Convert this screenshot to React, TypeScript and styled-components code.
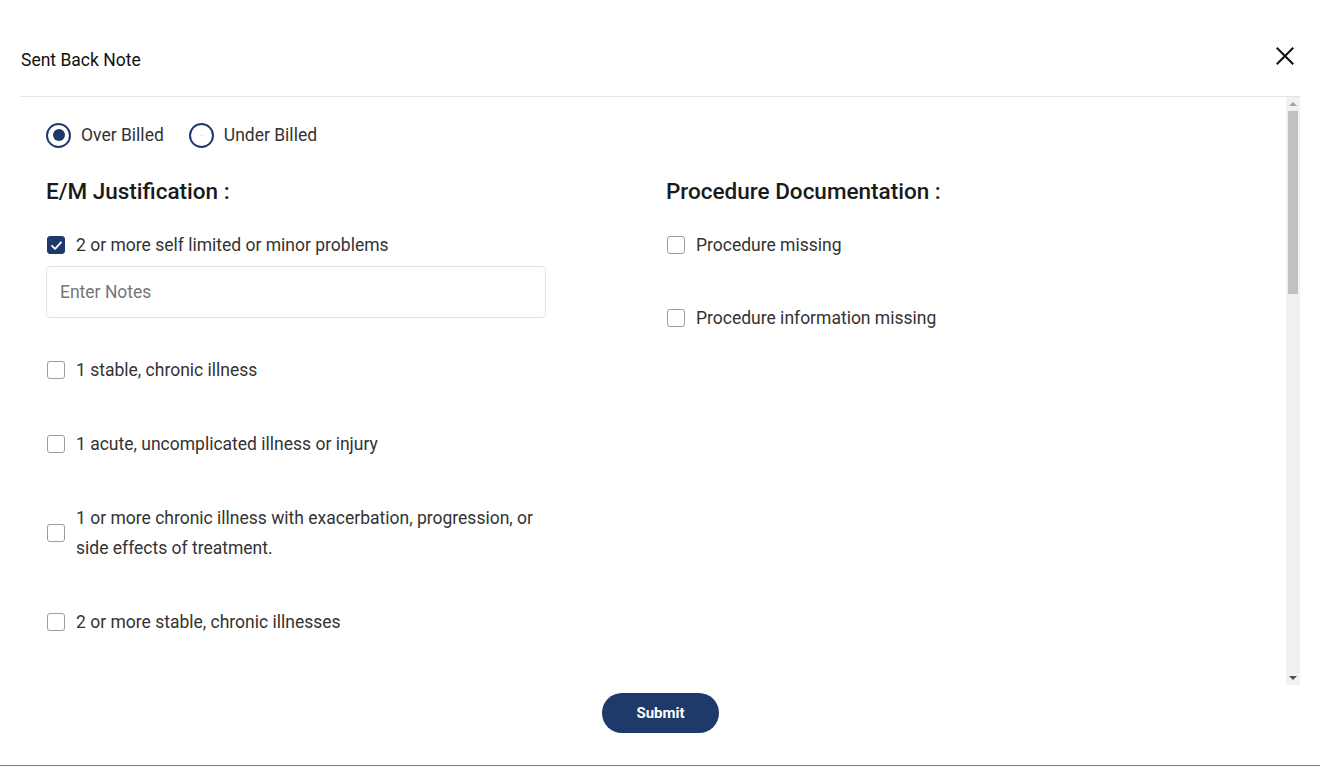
import React from "react";
import styled, { createGlobalStyle } from "styled-components";

const GlobalStyle = createGlobalStyle`
  html, body { margin: 0; padding: 0; background: #ffffff; }
  body { font-family: Roboto, "Liberation Sans", Arial, sans-serif; }
  * { box-sizing: border-box; }
`;

const NAVY = "#1e3a6a";

const Modal = styled.div`
  width: 1320px;
  height: 766px;
  background: #ffffff;
  border-bottom: 1px solid #7a7a7a;
  display: flex;
  flex-direction: column;
  padding: 0 20px 0 21px;
`;

const Header = styled.div`
  height: 97px;
  flex: none;
  display: flex;
  align-items: flex-start;
  justify-content: space-between;
  padding-top: 47px;
  border-bottom: 1px solid #e3e3e3;
`;

const Title = styled.h2`
  margin: 0;
  font-size: 17.5px;
  line-height: 26px;
  font-weight: 400;
  color: #111111;
`;

const CloseButton = styled.button`
  border: 0;
  background: transparent;
  padding: 0;
  margin-right: 6px;
  width: 18px;
  height: 18px;
  display: flex;
  cursor: pointer;
`;

const Body = styled.div`
  height: 588px;
  flex: none;
  display: flex;
`;

const Content = styled.div`
  flex: 1;
  overflow: hidden;
  padding: 26px 0 0 25px;
`;

const Scrollbar = styled.div`
  width: 14px;
  flex: none;
  background: #f1f1f1;
  display: flex;
  flex-direction: column;
  align-items: center;
`;

const ScrollArrow = styled.div<{ $down?: boolean }>`
  height: 14px;
  width: 14px;
  display: flex;
  align-items: center;
  justify-content: center;
  &::after {
    content: "";
    width: 0;
    height: 0;
    border-left: 4px solid transparent;
    border-right: 4px solid transparent;
    ${(p) =>
      p.$down
        ? `border-top: 4px solid #505050;`
        : `border-bottom: 4px solid #a3a3a3;`}
  }
`;

const ScrollThumb = styled.div`
  width: 10px;
  height: 183px;
  background: #c1c1c1;
`;

const ScrollSpacer = styled.div`
  flex: 1;
`;

const RadioRow = styled.div`
  display: flex;
  align-items: center;
  gap: 25px;
  height: 24px;
`;

const RadioOption = styled.label`
  display: flex;
  align-items: center;
  gap: 10px;
  font-size: 17.5px;
  color: #333333;
  cursor: pointer;
`;

const RadioCircle = styled.span<{ $checked?: boolean }>`
  width: 25px;
  height: 25px;
  border-radius: 50%;
  border: 2px solid ${NAVY};
  display: flex;
  align-items: center;
  justify-content: center;
  &::after {
    content: "";
    border-radius: 50%;
    width: ${(p) => (p.$checked ? "12px" : "1px")};
    height: ${(p) => (p.$checked ? "12px" : "1px")};
    background: ${(p) => (p.$checked ? NAVY : "#9aa3b5")};
  }
`;

const Columns = styled.div`
  display: grid;
  grid-template-columns: 620px 620px;
  margin-top: 32px;
`;

const Column = styled.div`
  display: flex;
  flex-direction: column;
`;

const Heading = styled.h3`
  margin: 0 0 27px;
  font-size: 22.5px;
  line-height: 24px;
  font-weight: 500;
  color: #1a1a1a;
`;

const Item = styled.div<{ $gap: number }>`
  width: 500px;
  padding-bottom: ${(p) => p.$gap}px;
`;

const CheckRow = styled.label`
  display: flex;
  align-items: center;
  gap: 11px;
  cursor: pointer;
`;

const Box = styled.span<{ $checked?: boolean }>`
  width: 18px;
  height: 18px;
  flex: none;
  margin-left: 1px;
  border-radius: 3px;
  display: flex;
  align-items: center;
  justify-content: center;
  background: ${(p) => (p.$checked ? NAVY : "#ffffff")};
  border: ${(p) => (p.$checked ? `1px solid ${NAVY}` : "1.5px solid #9c9c9c")};
`;

const Label = styled.span`
  font-size: 17.5px;
  line-height: 30px;
  color: #333333;
`;

const NotesInput = styled.input`
  display: block;
  margin-top: 6px;
  width: 500px;
  height: 52px;
  border: 1px solid #e2e2e2;
  border-radius: 4px;
  padding: 0 13px;
  font-family: inherit;
  font-size: 17.5px;
  color: #333333;
  outline: none;
  &::placeholder {
    color: #767676;
  }
`;

const Footer = styled.div`
  flex: none;
  display: flex;
  justify-content: center;
  padding-top: 8px;
`;

const SubmitButton = styled.button`
  width: 117px;
  height: 40px;
  border: 0;
  border-radius: 20px;
  background: ${NAVY};
  color: #ffffff;
  font-family: inherit;
  font-size: 15px;
  font-weight: 700;
  cursor: pointer;
`;

const CheckMark = () => (
  <svg width="13" height="13" viewBox="0 0 13 13" fill="none">
    <path d="M2 6.8 L5.1 9.8 L11 3.3" stroke="#ffffff" strokeWidth="1.8" strokeLinecap="round" strokeLinejoin="round" />
  </svg>
);

const CloseIcon = () => (
  <svg width="18" height="18" viewBox="0 0 18 18" fill="none">
    <path d="M1.5 1.5 L16.5 16.5 M16.5 1.5 L1.5 16.5" stroke="#111111" strokeWidth="2.1" strokeLinecap="square" />
  </svg>
);

type CheckItem = { label: string; checked?: boolean; notes?: boolean };

const emItems: CheckItem[] = [
  { label: "2 or more self limited or minor problems", checked: true, notes: true },
  { label: "1 stable, chronic illness" },
  { label: "1 acute, uncomplicated illness or injury" },
  { label: "1 or more chronic illness with exacerbation, progression, or side effects of treatment." },
  { label: "2 or more stable, chronic illnesses" },
  { label: "1 undiagnosed new problem with uncertain prognosis" },
];

const procItems: CheckItem[] = [
  { label: "Procedure missing" },
  { label: "Procedure information missing" },
];

const CheckList = ({ items, gap }: { items: CheckItem[]; gap: number }) => (
  <>
    {items.map((it) => (
      <Item key={it.label} $gap={it.notes ? 37 : gap}>
        <CheckRow>
          <Box $checked={it.checked}>{it.checked && <CheckMark />}</Box>
          <Label>{it.label}</Label>
        </CheckRow>
        {it.notes && <NotesInput placeholder="Enter Notes" />}
      </Item>
    ))}
  </>
);

export default function App() {
  return (
    <>
      <GlobalStyle />
      <Modal>
        <Header>
          <Title>Sent Back Note</Title>
          <CloseButton aria-label="Close">
            <CloseIcon />
          </CloseButton>
        </Header>
        <Body>
          <Content>
            <RadioRow>
              <RadioOption>
                <RadioCircle $checked />
                Over Billed
              </RadioOption>
              <RadioOption>
                <RadioCircle />
                Under Billed
              </RadioOption>
            </RadioRow>
            <Columns>
              <Column>
                <Heading>E/M Justification :</Heading>
                <CheckList items={emItems} gap={44} />
              </Column>
              <Column>
                <Heading>Procedure Documentation :</Heading>
                <CheckList items={procItems} gap={43} />
              </Column>
            </Columns>
          </Content>
          <Scrollbar>
            <ScrollArrow />
            <ScrollThumb />
            <ScrollSpacer />
            <ScrollArrow $down />
          </Scrollbar>
        </Body>
        <Footer>
          <SubmitButton>Submit</SubmitButton>
        </Footer>
      </Modal>
    </>
  );
}
